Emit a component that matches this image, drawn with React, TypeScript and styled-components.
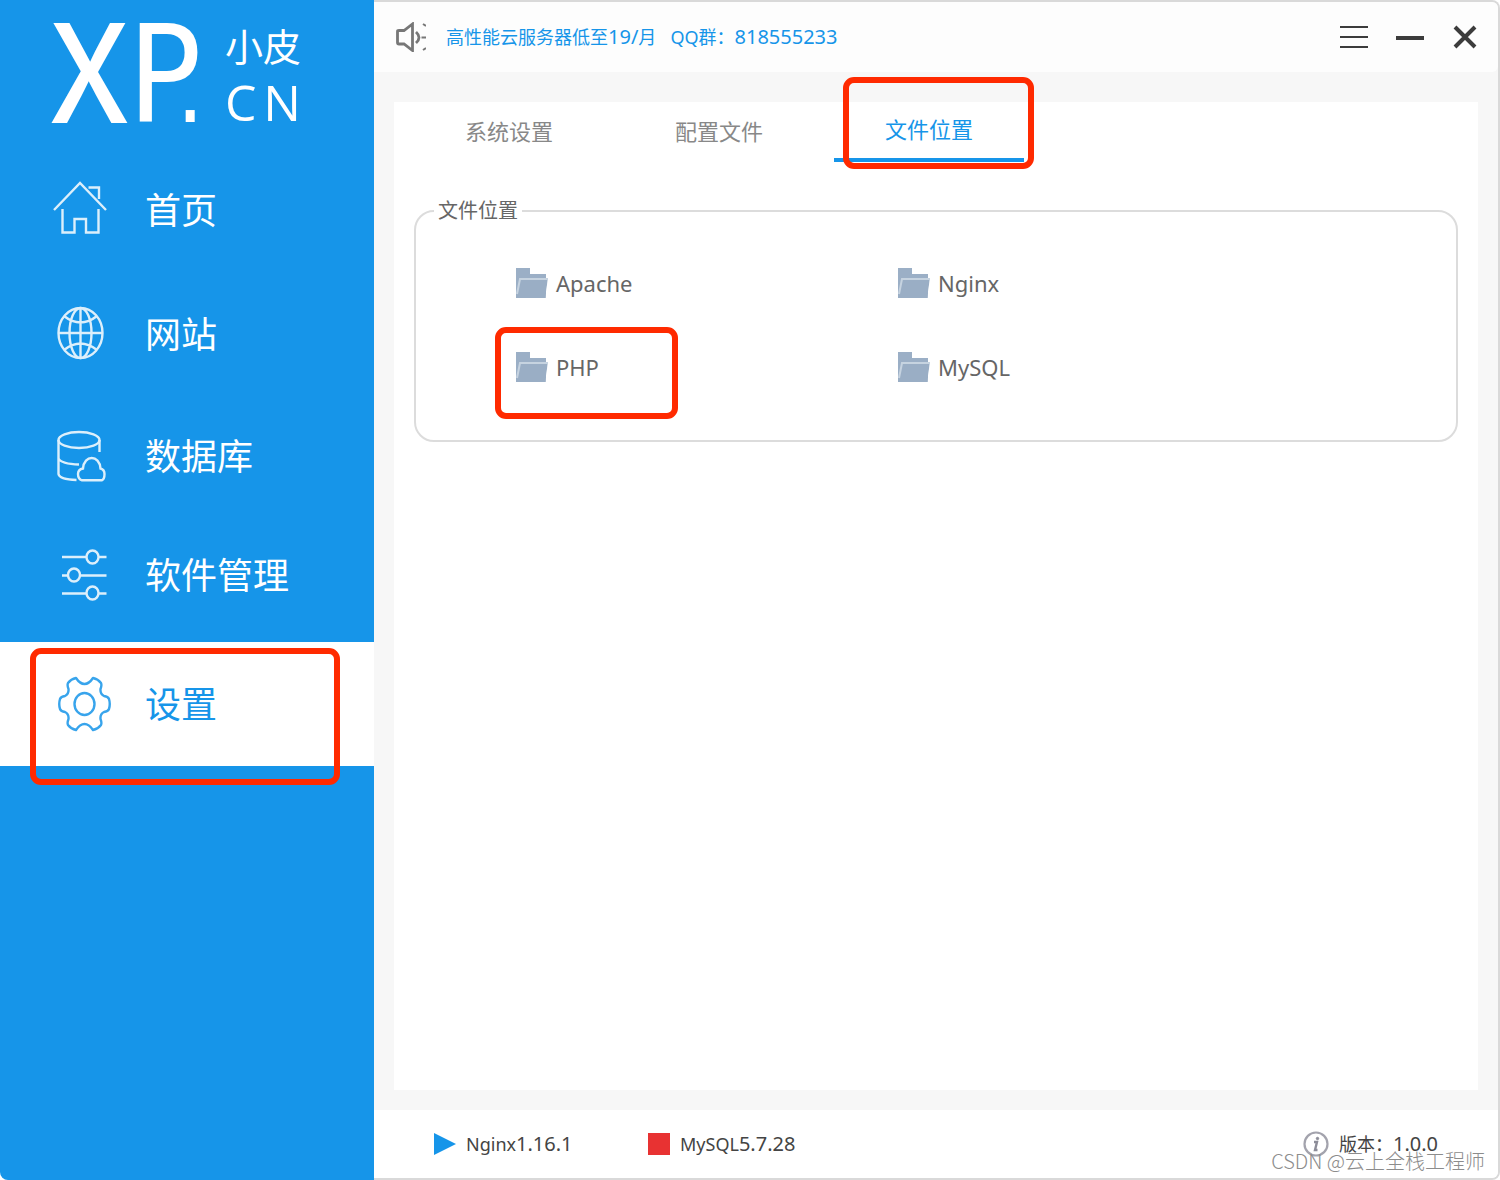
import React from "react";
import styled, { createGlobalStyle } from "styled-components";

const blue = "#1695e9";
const line = "#d9d9d9";
const marker = "#ff2a00";

const GlobalStyle = createGlobalStyle`
  * { box-sizing: border-box; }
  body {
    margin: 0;
    background: #fff;
    font-family: "Noto Sans", "Noto Sans CJK SC", sans-serif;
    color: #444;
  }
  button { font: inherit; border: 0; padding: 0; background: none; cursor: pointer; }
`;

const Window = styled.div`
  position: relative;
  display: flex;
  min-height: 100vh;
`;

const Sidebar = styled.aside`
  flex: none;
  width: 374px;
  background: ${blue};
  border-radius: 0 0 0 8px;
  color: #fff;
`;

const Logo = styled.div`
  display: flex;
  align-items: center;
  gap: 28px;
  height: 148px;
  padding-left: 51px;
`;

const LogoMark = styled.div`
  display: flex;
  align-items: baseline;
  width: 146px;
  padding-top: 4px;
  line-height: 148px;
`;

const LogoX = styled.span`
  font-family: "Noto Sans CJK SC", sans-serif;
  font-size: 134px;
  -webkit-text-stroke: 2px #fff;
`;

const LogoP = styled.span`
  font-family: "DejaVu Sans Condensed", "DejaVu Sans", sans-serif;
  font-size: 136px;
`;

const LogoDot = styled.span`
  margin-left: -25px;
  font-family: "DejaVu Sans Condensed", "DejaVu Sans", sans-serif;
  font-size: 96px;
`;

const LogoSide = styled.div`
  width: 76px;
`;

const LogoRow = styled.div<{ $size: number }>`
  display: flex;
  justify-content: space-between;
  font-family: "Open Sans", "Noto Sans CJK SC", sans-serif;
  font-size: ${(p) => p.$size}px;
  line-height: 56px;
`;

const NavItem = styled.button<{ $height: number; $active?: boolean }>`
  position: relative;
  display: flex;
  align-items: center;
  gap: 33px;
  width: 100%;
  height: ${(p) => p.$height}px;
  margin-top: ${(p) => (p.$active ? 8 : 0)}px;
  padding-left: 52px;
  background: ${(p) => (p.$active ? "#fff" : "transparent")};
  color: ${(p) => (p.$active ? blue : "#fff")};
  font-family: "Noto Sans CJK SC", sans-serif;
  font-size: 36px;
  line-height: 48px;
  text-align: left;
`;

const NavLabel = styled.span`
  padding-bottom: 4px;
`;

const NavIcon = styled.svg`
  width: 60px;
  height: 60px;
  fill: none;
  stroke: currentColor;
  stroke-width: 2.4;
  opacity: 0.85;
`;

const Highlight = styled.span<{ $top: number; $left: number; $width: number; $height: number }>`
  position: absolute;
  z-index: 2;
  top: ${(p) => p.$top}px;
  left: ${(p) => p.$left}px;
  width: ${(p) => p.$width}px;
  height: ${(p) => p.$height}px;
  border: 6px solid ${marker};
  border-radius: 11px;
  pointer-events: none;
`;

const Panel = styled.div`
  flex: 1;
  min-width: 0;
  display: flex;
  flex-direction: column;
  border: 2px solid ${line};
  border-left: 0;
  border-radius: 0 8px 8px 0;
  background: #f7f7f7;
`;

const Header = styled.header`
  display: flex;
  align-items: center;
  height: 70px;
  padding: 0 18px 0 22px;
  background: #fdfdfd;
  border-radius: 0 6px 6px 0;
`;

const Notice = styled.a`
  flex: 1;
  margin-left: 20px;
  color: ${blue};
  font-size: 18px;
  line-height: 28px;
  text-decoration: none;
  white-space: pre;
`;

const Digits = styled.span`
  font-size: 20px;
`;

const WindowButtons = styled.div`
  display: flex;
  gap: 28px;
`;

const WindowButton = styled.button`
  width: 28px;
  height: 28px;
  stroke: #3c3c3c;
`;

const Glyph = styled.svg`
  display: block;
  flex: none;
`;

const Card = styled.main`
  flex: 1;
  margin: 30px 20px 20px;
  padding: 0 20px;
  background: #fff;
`;

const Tabs = styled.nav`
  display: flex;
  gap: 20px;
`;

const Tab = styled.button<{ $active?: boolean }>`
  position: relative;
  width: 190px;
  height: 60px;
  padding-bottom: 2px;
  border-bottom: ${(p) => (p.$active ? `4px solid ${blue}` : "0")};
  color: ${(p) => (p.$active ? blue : "#888")};
  font-size: 22px;
  line-height: 32px;
`;

const Group = styled.fieldset`
  min-width: 0;
  margin: 34px 0 0;
  padding: 37px 100px 53px;
  border: 2px solid #dcdcdc;
  border-radius: 20px;
`;

const Legend = styled.legend`
  margin-left: -82px;
  padding: 0 4px;
  color: #666;
  font-size: 20px;
  line-height: 30px;
`;

const Folders = styled.div`
  display: grid;
  grid-template-columns: repeat(2, minmax(0, 382px));
  row-gap: 44px;
`;

const FolderButton = styled.button`
  position: relative;
  display: flex;
  align-items: center;
  gap: 8px;
  height: 40px;
  color: #666;
  font-size: 22px;
  line-height: 32px;
`;

const Footer = styled.footer`
  display: flex;
  align-items: center;
  height: 68px;
  padding: 0 60px;
  background: #fff;
  border-radius: 0 0 6px 0;
`;

const Status = styled.div`
  display: flex;
  align-items: center;
  gap: 10px;
  min-width: 214px;
  font-size: 18px;
  line-height: 28px;
`;

const Version = styled(Status)`
  min-width: 0;
  margin-left: auto;
`;

const Watermark = styled.div`
  position: absolute;
  right: 15px;
  bottom: 4px;
  color: #8c8c8c;
  font-family: "Noto Sans CJK SC", sans-serif;
  font-size: 20px;
  font-weight: 300;
  line-height: 30px;
`;

const HomeIcon = () => (
  <NavIcon viewBox="0 0 60 60">
    <path d="M2 30 28 3l26 27M10.500 29v23.500h12V39H34v13.500h12.500V29M36.500 7.500H47V19" />
  </NavIcon>
);

const GlobeIcon = () => (
  <NavIcon viewBox="0 0 60 60">
    <ellipse cx="28.500" cy="29" rx="22" ry="25" />
    <ellipse cx="28.500" cy="29" rx="11" ry="25" />
    <path d="M28.500 4v50M6.500 29h44M12 12q16.500 13 33 0M12 46q16.500-13 33 0" />
  </NavIcon>
);

const DatabaseIcon = () => (
  <NavIcon viewBox="0 0 60 60">
    <ellipse cx="27" cy="14" rx="20.500" ry="8" />
    <path d="M6.500 14v34q1 5.500 18 6M6.500 32.500q3 5.500 20.500 6M47.500 14v12" />
    <path d="M30 54.300q-4-1.300-4-6.300 0-4.500 5-5.500c1-14 16.500-14 17.500 0q4 1 4 5.500 0 5-2.500 6.300z" />
  </NavIcon>
);

const SlidersIcon = () => (
  <NavIcon viewBox="0 0 60 60">
    <path d="M10 12h24.500M46.500 12h8M10 30.500h6M28 30.500h26.500M10 48.500h24.500M46.500 48.500h8" />
    <ellipse cx="40.500" cy="12" rx="6" ry="6.500" />
    <ellipse cx="22" cy="30" rx="6" ry="6.500" />
    <ellipse cx="40.500" cy="48" rx="6" ry="6.500" />
  </NavIcon>
);

const GearIcon = () => (
  <NavIcon viewBox="0 0 60 60">
    <path d="M24 4Q28 10 32.500 10Q37 10 41 4Q46 5 49 9Q50 11 48.500 15Q48 20 52 22Q56 22.500 57 25Q58.500 30 57 35Q56 37.500 52 38Q48 40 48.500 45Q50 49 49 51Q46 55 41 56Q37 50 32.500 50Q28 50 24 56Q19 55 16 51Q15 49 16.500 45Q17 40 13 38Q9 37.500 8 35Q6.500 30 8 25Q9 22.500 13 22Q17 20 16.500 15Q15 11 16 9Q19 5 24 4Z" strokeLinejoin="round" />
    <ellipse cx="32.500" cy="30" rx="10" ry="11" />
  </NavIcon>
);

const SpeakerIcon = () => (
  <Glyph width="30" height="30" viewBox="0 0 30 30" fill="none" stroke="#777" strokeWidth="2">
    <path d="M1.500 9.500Q1.500 8.500 3 8.500H8L16.500 2V28.500L8 22H3Q1.500 22 1.500 20.500z" strokeWidth="2.800" />
    <path d="M20 10q6 5.500 0 11" strokeWidth="2.800" />
    <path d="M25.500 15.500H30M27 2l3 2M27 28l3-2" />
  </Glyph>
);

const FolderIcon = () => (
  <Glyph width="32" height="30" viewBox="0 0 32 30">
    <path d="M0 0h14v6h16v24H0z" fill="#9bafc6" />
    <path d="M3.500 10.500H32L29 30H0z" fill="#9aaec5" />
    <path d="M1 26 4 11h28" fill="none" stroke="#c6d3e0" strokeWidth="2" />
    <path d="M31.500 12 29.500 30H32V12z" fill="#fff" opacity="0.5" />
  </Glyph>
);

const InfoIcon = () => (
  <Glyph width="26" height="26" viewBox="0 0 26 26" fill="none" stroke="#a3a3ad">
    <circle cx="13" cy="13" r="11.500" strokeWidth="2.200" />
    <path d="M11 11h3l-2 8h2.500" strokeWidth="2.400" stroke="#8c8c98" />
    <circle cx="14.500" cy="7.500" r="1.200" fill="#8c8c98" stroke="#8c8c98" />
  </Glyph>
);

const navigation = [
  { label: "首页", icon: <HomeIcon />, height: 124 },
  { label: "网站", icon: <GlobeIcon />, height: 124 },
  { label: "数据库", icon: <DatabaseIcon />, height: 120 },
  { label: "软件管理", icon: <SlidersIcon />, height: 118 },
  { label: "设置", icon: <GearIcon />, height: 124, active: true },
];

const tabs = ["系统设置", "配置文件", "文件位置"];
const folders = ["Apache", "Nginx", "PHP", "MySQL"];

export default function App() {
  return (
    <Window>
      <GlobalStyle />
      <Sidebar>
        <Logo>
          <LogoMark>
            <LogoX>X</LogoX>
            <LogoP>P</LogoP>
            <LogoDot>.</LogoDot>
          </LogoMark>
          <LogoSide>
            <LogoRow $size={38}>
              <span>小</span>
              <span>皮</span>
            </LogoRow>
            <LogoRow $size={50}>
              <span>C</span>
              <span>N</span>
            </LogoRow>
          </LogoSide>
        </Logo>
        <nav>
          {navigation.map((item) => (
            <NavItem key={item.label} $height={item.height} $active={item.active}>
              {item.icon}
              <NavLabel>{item.label}</NavLabel>
              {item.active && <Highlight $top={6} $left={30} $width={310} $height={137} />}
            </NavItem>
          ))}
        </nav>
      </Sidebar>
      <Panel>
        <Header>
          <SpeakerIcon />
          <Notice href="#">
            高性能云服务器低至<Digits>19/</Digits>月{"   "}QQ群：<Digits>818555233</Digits>
          </Notice>
          <WindowButtons>
            <WindowButton aria-label="菜单">
              <Glyph width="28" height="28" strokeWidth="2">
                <path d="M0 4h28M0 14h28M0 24h28" />
              </Glyph>
            </WindowButton>
            <WindowButton aria-label="最小化">
              <Glyph width="28" height="28" strokeWidth="4">
                <path d="M0 15h28" />
              </Glyph>
            </WindowButton>
            <WindowButton aria-label="关闭">
              <Glyph width="28" height="28" strokeWidth="4">
                <path d="M3 4 23 24M23 4 3 24" />
              </Glyph>
            </WindowButton>
          </WindowButtons>
        </Header>
        <Card>
          <Tabs>
            {tabs.map((label) => (
              <Tab key={label} $active={label === "文件位置"}>
                {label}
                {label === "文件位置" && <Highlight $top={-25} $left={9} $width={191} $height={92} />}
              </Tab>
            ))}
          </Tabs>
          <Group>
            <Legend>文件位置</Legend>
            <Folders>
              {folders.map((name) => (
                <FolderButton key={name}>
                  <FolderIcon />
                  {name}
                  {name === "PHP" && <Highlight $top={-20} $left={-21} $width={183} $height={92} />}
                </FolderButton>
              ))}
            </Folders>
          </Group>
        </Card>
        <Footer>
          <Status>
            <Glyph width="22" height="22">
              <path d="M0 0 22 11 0 22z" fill={blue} />
            </Glyph>
            <span>
              Nginx<Digits>1.16.1</Digits>
            </span>
          </Status>
          <Status>
            <Glyph width="22" height="22">
              <path d="M0 0h22v22H0z" fill="#e83232" />
            </Glyph>
            <span>
              MySQL<Digits>5.7.28</Digits>
            </span>
          </Status>
          <Version>
            <InfoIcon />
            <span>
              版本：<Digits>1.0.0</Digits>
            </span>
          </Version>
        </Footer>
      </Panel>
      <Watermark>CSDN @云上全栈工程师</Watermark>
    </Window>
  );
}
